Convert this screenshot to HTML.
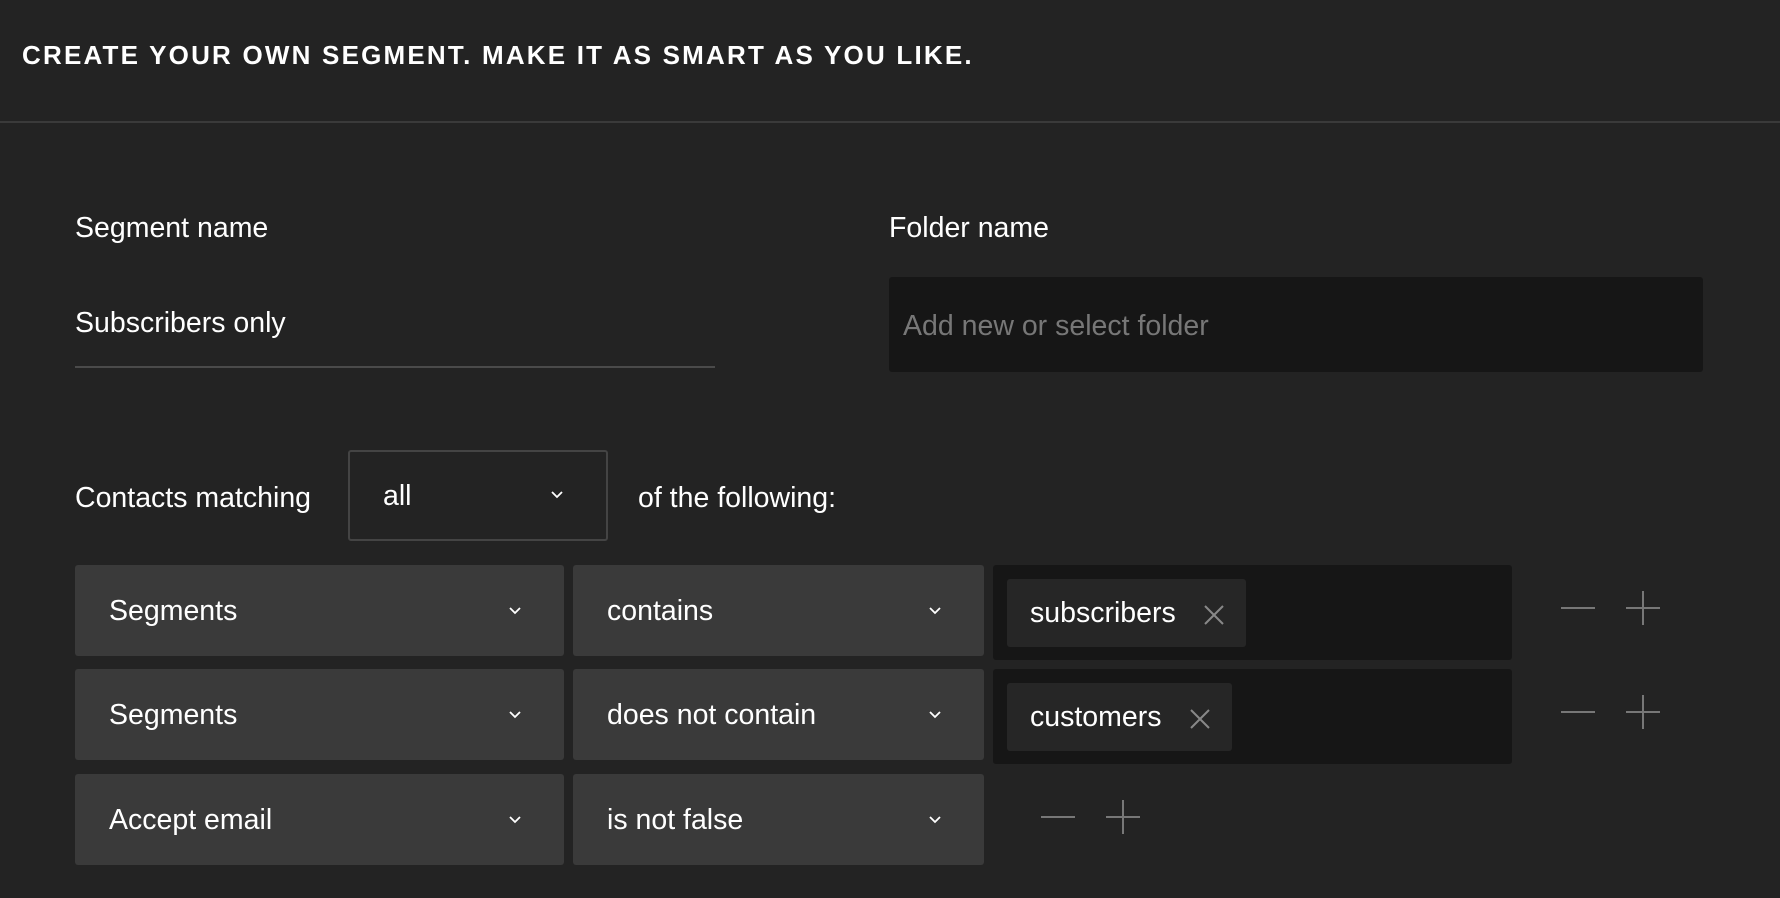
<!DOCTYPE html>
<html><head><meta charset="utf-8"><style>
*{box-sizing:border-box;margin:0;padding:0}
body{width:1780px;height:898px;background:#232323;font-family:"Liberation Sans",sans-serif;color:#fff;position:relative;overflow:hidden}
.a{position:absolute}
.title{left:22px;top:40px;font-size:26px;font-weight:bold;letter-spacing:2.2px;white-space:nowrap;line-height:30px}
.hr{left:0;top:121px;width:1780px;height:2px;background:#3a3a3a}
.lbl{font-size:28.5px;line-height:32px;white-space:nowrap}
.sel{background:#3a3a3a;border-radius:3px;height:91px}
.sel span{position:absolute;left:34px;top:30px;font-size:28.5px;line-height:32px;white-space:nowrap}
.chev{position:absolute;top:38px;width:14px;height:14px}
.tagbox{background:#161616;border-radius:3px}
.chip{background:#262626;border-radius:3px;position:absolute;left:14px;top:14px;height:68px}
.chip span{position:absolute;left:23px;top:18px;font-size:28.5px;line-height:32px}
.pm{position:absolute;width:120px;height:40px}
</style></head><body>
<div class="a title">CREATE YOUR OWN SEGMENT. MAKE IT AS SMART AS YOU LIKE.</div>
<div class="a hr"></div>

<div class="a lbl" style="left:75px;top:212px">Segment name</div>
<div class="a lbl" style="left:889px;top:212px">Folder name</div>
<div class="a lbl" style="left:75px;top:307px">Subscribers only</div>
<div class="a" style="left:75px;top:366px;width:640px;height:2px;background:#4a4a4a"></div>
<div class="a tagbox" style="left:889px;top:277px;width:814px;height:95px"></div>
<div class="a lbl" style="left:903px;top:310px;color:#777">Add new or select folder</div>

<div class="a lbl" style="left:75px;top:482px">Contacts matching</div>
<div class="a" style="left:348px;top:450px;width:260px;height:91px;border:2px solid #444;border-radius:3px">
<span class="a lbl" style="left:33px;top:28px">all</span>
<svg class="chev" style="left:200px;top:35px" viewBox="0 0 14 14"><path d="M2 5l5 5 5-5" fill="none" stroke="#fff" stroke-width="1.8"/></svg>
</div>
<div class="a lbl" style="left:638px;top:482px">of the following:</div>

<!-- row 1 -->
<div class="a sel" style="left:75px;top:565px;width:489px"><span>Segments</span><svg class="chev" style="left:433px" viewBox="0 0 14 14"><path d="M2 5l5 5 5-5" fill="none" stroke="#fff" stroke-width="1.8"/></svg></div>
<div class="a sel" style="left:573px;top:565px;width:411px"><span>contains</span><svg class="chev" style="left:355px" viewBox="0 0 14 14"><path d="M2 5l5 5 5-5" fill="none" stroke="#fff" stroke-width="1.8"/></svg></div>
<div class="a tagbox" style="left:993px;top:565px;width:519px;height:95px"><div class="chip" style="width:239px"><span>subscribers</span><svg class="a" style="left:197px;top:26px" width="20" height="20" viewBox="0 0 20 20"><path d="M1 1l18 18M19 1L1 19" stroke="#888" stroke-width="2"/></svg></div></div>
<svg class="pm" style="left:1560px;top:588px" viewBox="0 0 120 40"><path d="M1 20h34M66 20h34M83 3v34" stroke="#777" stroke-width="2"/></svg>

<!-- row 2 -->
<div class="a sel" style="left:75px;top:669px;width:489px"><span>Segments</span><svg class="chev" style="left:433px" viewBox="0 0 14 14"><path d="M2 5l5 5 5-5" fill="none" stroke="#fff" stroke-width="1.8"/></svg></div>
<div class="a sel" style="left:573px;top:669px;width:411px"><span>does not contain</span><svg class="chev" style="left:355px" viewBox="0 0 14 14"><path d="M2 5l5 5 5-5" fill="none" stroke="#fff" stroke-width="1.8"/></svg></div>
<div class="a tagbox" style="left:993px;top:669px;width:519px;height:95px"><div class="chip" style="width:225px"><span>customers</span><svg class="a" style="left:183px;top:26px" width="20" height="20" viewBox="0 0 20 20"><path d="M1 1l18 18M19 1L1 19" stroke="#888" stroke-width="2"/></svg></div></div>
<svg class="pm" style="left:1560px;top:692px" viewBox="0 0 120 40"><path d="M1 20h34M66 20h34M83 3v34" stroke="#777" stroke-width="2"/></svg>

<!-- row 3 -->
<div class="a sel" style="left:75px;top:774px;width:489px"><span>Accept email</span><svg class="chev" style="left:433px" viewBox="0 0 14 14"><path d="M2 5l5 5 5-5" fill="none" stroke="#fff" stroke-width="1.8"/></svg></div>
<div class="a sel" style="left:573px;top:774px;width:411px"><span>is not false</span><svg class="chev" style="left:355px" viewBox="0 0 14 14"><path d="M2 5l5 5 5-5" fill="none" stroke="#fff" stroke-width="1.8"/></svg></div>
<svg class="pm" style="left:1040px;top:797px" viewBox="0 0 120 40"><path d="M1 20h34M66 20h34M83 3v34" stroke="#777" stroke-width="2"/></svg>
</body></html>
